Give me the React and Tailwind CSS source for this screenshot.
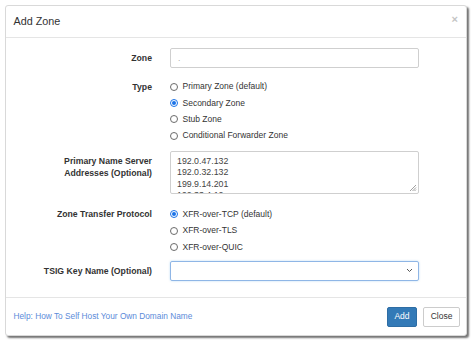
import React from "react";

function Radio({ checked, label }) {
  return (
    <div className="flex items-center h-[16.3px]">
      <span
        className={
          "w-[8px] h-[8px] rounded-full border flex items-center justify-center " +
          (checked ? "border-[#1a73e8]" : "border-[#6b6b6b]")
        }
      >
        {checked && <span className="w-[4px] h-[4px] rounded-full bg-[#1a73e8]"></span>}
      </span>
      <span className="ml-[4.5px] text-[8.5px] text-[#333]">{label}</span>
    </div>
  );
}

function Label({ children, className = "" }) {
  return (
    <div className={"w-[146px] text-right font-bold text-[8.7px] text-[#333] leading-[12px] shrink-0 " + className}>
      {children}
    </div>
  );
}

export default function App() {
  return (
    <div className="w-[474px] h-[343px] bg-white pt-[5px] pl-[5px]" style={{ fontFamily: '"Liberation Sans", Arial, sans-serif' }}>
      <div className="w-[462px] h-[331px] bg-white border border-[#d9d9d9] rounded-[3px] shadow-[2px_2px_2px_rgba(0,0,0,0.55)] flex flex-col">
        {/* header */}
        <div className="h-[32px] border-b border-[#e5e5e5] flex items-center justify-between pl-[7.5px] pr-[8px] shrink-0">
          <span className="text-[10.8px] text-[#333] mt-[-1px]">Add Zone</span>
          <span className="text-[11px] font-bold text-[#c4c4c4] mt-[-5px]">×</span>
        </div>

        {/* body */}
        <div className="flex-1 pt-[10px]">
          <div className="flex items-center h-[20px]">
            <Label>Zone</Label>
            <div className="ml-[18px] w-[249px] h-[20px] border border-[#cfcfcf] rounded-[2px] flex items-center pl-[7px] text-[8.5px] text-[#aaa]">
              .
            </div>
          </div>

          <div className="flex mt-[10.5px]">
            <Label className="leading-[16.3px]">Type</Label>
            <div className="ml-[18px] flex flex-col">
              <Radio label="Primary Zone (default)" />
              <Radio checked label="Secondary Zone" />
              <Radio label="Stub Zone" />
              <Radio label="Conditional Forwarder Zone" />
            </div>
          </div>

          <div className="flex mt-[7.5px]">
            <Label className="pt-[4px]">
              Primary Name Server
              <br />
              Addresses (Optional)
            </Label>
            <div className="ml-[18px] w-[249px] h-[43.3px] border border-[#cfcfcf] rounded-[2px] relative overflow-hidden pl-[6px] pt-[3.5px] text-[8.8px] leading-[11.5px] text-[#444]">
              <div>192.0.47.132</div>
              <div>192.0.32.132</div>
              <div>199.9.14.201</div>
              <div>192.33.4.12</div>
              <svg className="absolute right-[1px] bottom-[1px]" width="9" height="9" viewBox="0 0 9 9">
                <path d="M8 2 L2 8 M8 4.5 L4.5 8 M8 6.5 L6.5 8" stroke="#888" strokeWidth="0.8" />
              </svg>
            </div>
          </div>

          <div className="flex mt-[11.8px]">
            <Label className="leading-[16.3px]">Zone Transfer Protocol</Label>
            <div className="ml-[18px] flex flex-col">
              <Radio checked label="XFR-over-TCP (default)" />
              <Radio label="XFR-over-TLS" />
              <Radio label="XFR-over-QUIC" />
            </div>
          </div>

          <div className="flex items-center mt-[6px] h-[19.5px]">
            <Label>TSIG Key Name (Optional)</Label>
            <div className="ml-[18px] w-[249px] h-[19.5px] border border-[#8fb6e6] rounded-[2px] shadow-[0_0_2px_rgba(102,175,233,0.5)] flex items-center justify-end pr-[5px]">
              <svg width="7" height="5" viewBox="0 0 7 5">
                <path d="M1 1 L3.5 3.5 L6 1" fill="none" stroke="#555" strokeWidth="1" />
              </svg>
            </div>
          </div>
        </div>

        {/* footer */}
        <div className="h-[38px] border-t border-[#e5e5e5] flex items-center justify-between pl-[7.5px] pr-[6px] shrink-0">
          <span className="text-[8.3px] text-[#5b8bd9]">Help: How To Self Host Your Own Domain Name</span>
          <div className="flex gap-[6px]">
            <button className="w-[30px] h-[20px] rounded-[2px] bg-[#337ab7] border border-[#2e6da4] text-white text-[8.5px]">
              Add
            </button>
            <button className="w-[37px] h-[20px] rounded-[2px] bg-white border border-[#cccccc] text-[#333] text-[8.5px]">
              Close
            </button>
          </div>
        </div>
      </div>
    </div>
  );
}
